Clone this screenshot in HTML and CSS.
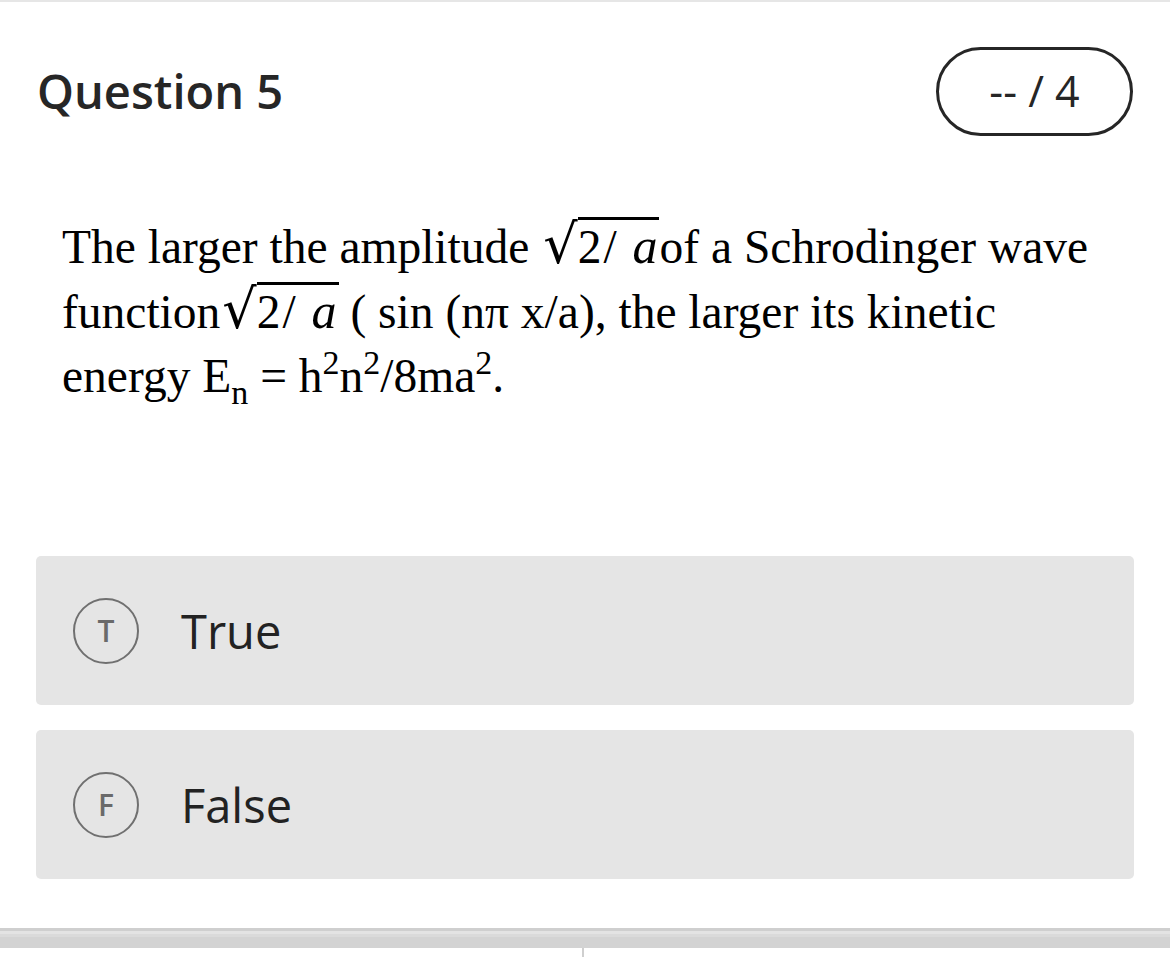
FILE: index.html
```html
<!DOCTYPE html>
<html>
<head>
<meta charset="utf-8">
<link rel="stylesheet" href="styles.css">
</head>
<body>
<div class="page">
  <div class="topline"></div>
  <header class="qhead">
    <h1 class="qtitle">Question 5</h1>
    <div class="points">-- / 4</div>
  </header>
  <div class="qtext">
    <p>The larger the amplitude <span class="sqrt"><span class="rad">√</span><span class="radicand">2/ <i class="ia">a</i></span></span>of a Schrodinger wave function<span class="sqrt"><span class="rad">√</span><span class="radicand">2/ <i class="ia">a</i></span></span> ( sin (nπ x/a), the larger its kinetic energy E<sub>n</sub> = h<sup>2</sup>n<sup>2</sup>/8ma<sup>2</sup>.</p>
  </div>
  <div class="options">
    <div class="option">
      <span class="badge">T</span>
      <span class="olabel">True</span>
    </div>
    <div class="option">
      <span class="badge">F</span>
      <span class="olabel">False</span>
    </div>
  </div>
  <div class="footer">
    <div class="fbar"></div>
    <div class="ftick"></div>
  </div>
</div>
</body>
</html>
```
FILE: styles.css
```css
html, body {
  margin: 0;
  padding: 0;
  background: #ffffff;
}
.page {
  width: 1170px;
  height: 957px;
  overflow: hidden;
  display: flex;
  flex-direction: column;
  font-family: "Open Sans", "Noto Sans", sans-serif;
  color: #262626;
}
.topline {
  height: 2px;
  background: #e6e6e6;
}
.qhead {
  display: flex;
  justify-content: space-between;
  align-items: center;
  padding: 45px 37px 0 37px;
}
.qtitle {
  margin: 0;
  font-size: 47px;
  font-weight: 600;
  line-height: 1;
  color: #262626;
}
.points {
  box-sizing: border-box;
  width: 197px;
  height: 89px;
  border: 3px solid #262626;
  border-radius: 45px;
  display: flex;
  align-items: center;
  justify-content: center;
  font-size: 43px;
  font-weight: 500;
  color: #262626;
  padding-bottom: 2px;
}
.qtext {
  padding: 0 56px 0 62px;
  margin-top: 78px;
  height: 342px;
}
.qtext p {
  margin: 0;
  font-family: "Liberation Serif", "Times New Roman", serif;
  font-size: 47.5px;
  line-height: 64px;
  color: #000;
}
.sqrt {
  white-space: nowrap;
}
.rad {
  font-family: "DejaVu Serif", serif;
  font-size: 54px;
  font-weight: 300;
  line-height: 0;
  margin-left: 2px;
}
.radicand {
  border-top: 3px solid #000;
  padding-top: 1px;
  padding-right: 2px;
  letter-spacing: 2px;
}
.ia {
  font-style: italic;
  font-size: 50px;
  letter-spacing: 0;
}
sub {
  font-size: 34px;
  vertical-align: -12px;
  line-height: 0;
}
sup {
  font-size: 34px;
  vertical-align: 18px;
  line-height: 0;
}
.options {
  display: flex;
  flex-direction: column;
  gap: 25px;
  padding: 0 36px 0 36px;
}
.option {
  height: 149px;
  background: #e5e5e5;
  border-radius: 5px;
  display: flex;
  align-items: center;
  padding-left: 37px;
}
.badge {
  box-sizing: border-box;
  width: 66px;
  height: 66px;
  border: 2px solid #707070;
  border-radius: 50%;
  display: flex;
  align-items: center;
  justify-content: center;
  font-size: 30px;
  font-weight: 600;
  color: #6a6a6a;
  padding-bottom: 1px;
}
.olabel {
  margin-left: 42px;
  font-size: 47px;
  color: #222;
}
.footer {
  margin-top: 49px;
}
.fbar {
  height: 20px;
  background: linear-gradient(#cfcfcf 0 3px, #e3e3e3 3px 6px, #dadada 6px 9px, #d3d3d3 9px 20px);
}
.ftick {
  width: 2px;
  height: 9px;
  margin-left: 582px;
  background: #cfcfcf;
}
```
